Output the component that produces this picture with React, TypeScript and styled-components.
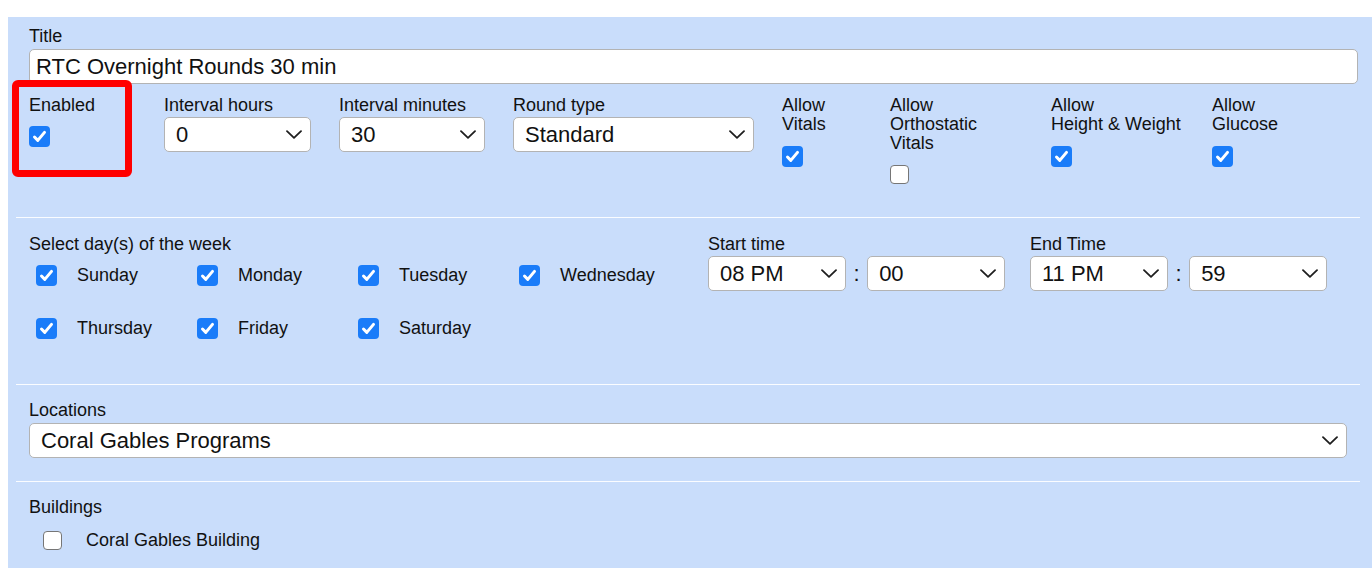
import React from "react";
import styled, { createGlobalStyle } from "styled-components";

const GlobalStyle = createGlobalStyle`
  html, body { margin: 0; padding: 0; background: #ffffff; }
  body {
    font-family: "Liberation Sans", Arial, Helvetica, sans-serif;
    color: #111111;
  }
  * { box-sizing: border-box; }
`;

const Page = styled.div`
  padding: 17px 0 0 8px;
`;

const Panel = styled.div`
  background: #c9ddfb;
  padding: 0 12px 0 8px;
  min-height: 560px;
`;

const Section = styled.section<{ $pt: number; $pb: number }>`
  padding: ${(p) => p.$pt}px 2px ${(p) => p.$pb}px 13px;
  & + & {
    border-top: 1px solid rgba(255, 255, 255, 0.9);
  }
`;

const Label = styled.div`
  padding-top: 1px;
  font-size: 18px;
  line-height: 19px;
  color: #111;
  white-space: nowrap;
`;

const TextInput = styled.input`
  display: block;
  width: 100%;
  height: 35px;
  margin-top: 3px;
  padding: 0 6px;
  border: 1px solid #b3b3b3;
  border-radius: 5px;
  background: #fff;
  font-family: inherit;
  font-size: 22px;
  color: #111;
  outline: none;
`;

const Row = styled.div<{ $mt?: number }>`
  display: flex;
  align-items: flex-start;
  margin-top: ${(p) => p.$mt ?? 0}px;
`;

const Field = styled.div<{ $w?: number }>`
  position: relative;
  display: flex;
  flex-direction: column;
  align-items: flex-start;
  width: ${(p) => (p.$w ? `${p.$w}px` : "auto")};
  flex: ${(p) => (p.$w ? "0 0 auto" : "1 1 auto")};
`;

const SelectBox = styled.div<{ $w?: number; $mt?: number; $mr?: number }>`
  display: flex;
  align-items: center;
  justify-content: space-between;
  width: ${(p) => (p.$w ? `${p.$w}px` : "auto")};
  align-self: ${(p) => (p.$w ? "flex-start" : "stretch")};
  height: 35px;
  margin-top: ${(p) => p.$mt ?? 2}px;
  margin-right: ${(p) => p.$mr ?? 0}px;
  padding: 0 8px 0 11px;
  background: #fff;
  border: 1px solid #b3b3b3;
  border-radius: 5px;
  font-size: 22px;
  color: #111;
`;

const Chevron = styled.svg`
  flex: 0 0 auto;
  width: 16px;
  height: 9px;
`;

const CheckBox = styled.span<{ $checked: boolean; $mt?: number }>`
  display: inline-flex;
  align-items: center;
  justify-content: center;
  flex: 0 0 auto;
  width: ${(p) => (p.$checked ? 21 : 19)}px;
  height: ${(p) => (p.$checked ? 21 : 19)}px;
  margin-top: ${(p) => p.$mt ?? 0}px;
  border-radius: 4px;
  background: ${(p) => (p.$checked ? "#1a7cf9" : "#ffffff")};
  border: ${(p) => (p.$checked ? "none" : "1.5px solid #767676")};
`;

const Highlight = styled.div`
  position: absolute;
  left: -17px;
  top: -15px;
  width: 120px;
  height: 97px;
  border: 7px solid #ff0000;
  border-radius: 6px;
  pointer-events: none;
`;

const DaysBlock = styled.div`
  width: 679px;
  flex: 0 0 auto;
`;

const DaysGrid = styled.div`
  display: grid;
  grid-template-columns: repeat(4, 161px);
  row-gap: 32px;
  margin: 11px 0 0 7px;
`;

const DayItem = styled.div`
  display: flex;
  align-items: center;
  gap: 20px;
  font-size: 18px;
  line-height: 21px;
`;

const TimeBlock = styled.div<{ $w?: number }>`
  width: ${(p) => (p.$w ? `${p.$w}px` : "auto")};
  flex: 0 0 auto;
`;

const TimeRow = styled.div`
  display: flex;
  align-items: center;
  margin-top: 2px;
`;

const Colon = styled.span`
  font-size: 22px;
  margin: 0 7.5px;
  color: #111;
`;

const BuildingItem = styled.div`
  display: flex;
  align-items: center;
  gap: 24px;
  margin: 13px 0 0 14px;
  font-size: 18px;
  line-height: 21px;
`;

const ChevronIcon = () => (
  <Chevron viewBox="0 0 16 9" aria-hidden>
    <path d="M1 1.2 L8 7.8 L15 1.2" fill="none" stroke="#1e1e1e" strokeWidth="1.8" strokeLinecap="round" strokeLinejoin="round" />
  </Chevron>
);

const Check = ({ checked, mt }: { checked: boolean; mt?: number }) => (
  <CheckBox $checked={checked} $mt={mt}>
    {checked && (
      <svg width="15" height="15" viewBox="0 0 15 15" aria-hidden>
        <path d="M2.5 8 L5.8 11.4 L12.5 3.4" fill="none" stroke="#fff" strokeWidth="3" strokeLinecap="round" strokeLinejoin="round" />
      </svg>
    )}
  </CheckBox>
);

const Select = ({ value, w, mt, mr }: { value: string; w?: number; mt?: number; mr?: number }) => (
  <SelectBox $w={w} $mt={mt} $mr={mr}>
    <span>{value}</span>
    <ChevronIcon />
  </SelectBox>
);

const days = ["Sunday", "Monday", "Tuesday", "Wednesday", "Thursday", "Friday", "Saturday"];

export default function App() {
  return (
    <>
      <GlobalStyle />
      <Page>
        <Panel>
          <Section $pt={9} $pb={33}>
            <Label>Title</Label>
            <TextInput defaultValue="RTC Overnight Rounds 30 min" readOnly />
            <Row $mt={11}>
              <Field $w={135}>
                <Highlight />
                <Label>Enabled</Label>
                <Check checked mt={11} />
              </Field>
              <Field $w={175}>
                <Label>Interval hours</Label>
                <Select value="0" w={147} />
              </Field>
              <Field $w={174}>
                <Label>Interval minutes</Label>
                <Select value="30" w={146} />
              </Field>
              <Field $w={269}>
                <Label>Round type</Label>
                <Select value="Standard" w={241} />
              </Field>
              <Field $w={108}>
                <Label>
                  Allow
                  <br />
                  Vitals
                </Label>
                <Check checked mt={12} />
              </Field>
              <Field $w={161}>
                <Label>
                  Allow
                  <br />
                  Orthostatic
                  <br />
                  Vitals
                </Label>
                <Check checked={false} mt={12} />
              </Field>
              <Field $w={161}>
                <Label>
                  Allow
                  <br />
                  Height &amp; Weight
                </Label>
                <Check checked mt={12} />
              </Field>
              <Field $w={140}>
                <Label>
                  Allow
                  <br />
                  Glucose
                </Label>
                <Check checked mt={12} />
              </Field>
            </Row>
          </Section>

          <Section $pt={16} $pb={45}>
            <Row>
              <DaysBlock>
                <Label>Select day(s) of the week</Label>
                <DaysGrid>
                  {days.map((d) => (
                    <DayItem key={d}>
                      <Check checked />
                      <span>{d}</span>
                    </DayItem>
                  ))}
                </DaysGrid>
              </DaysBlock>
              <TimeBlock $w={322}>
                <Label>Start time</Label>
                <TimeRow>
                  <Select value="08 PM" w={138} mt={0} />
                  <Colon>:</Colon>
                  <Select value="00" w={138} mt={0} />
                </TimeRow>
              </TimeBlock>
              <TimeBlock>
                <Label>End Time</Label>
                <TimeRow>
                  <Select value="11 PM" w={138} mt={0} />
                  <Colon>:</Colon>
                  <Select value="59" w={138} mt={0} />
                </TimeRow>
              </TimeBlock>
            </Row>
          </Section>

          <Section $pt={15} $pb={23}>
            <Label>Locations</Label>
            <Select value="Coral Gables Programs" mt={3} mr={11} />
          </Section>

          <Section $pt={15} $pb={20}>
            <Label>Buildings</Label>
            <BuildingItem>
              <Check checked={false} />
              <span>Coral Gables Building</span>
            </BuildingItem>
          </Section>
        </Panel>
      </Page>
    </>
  );
}
